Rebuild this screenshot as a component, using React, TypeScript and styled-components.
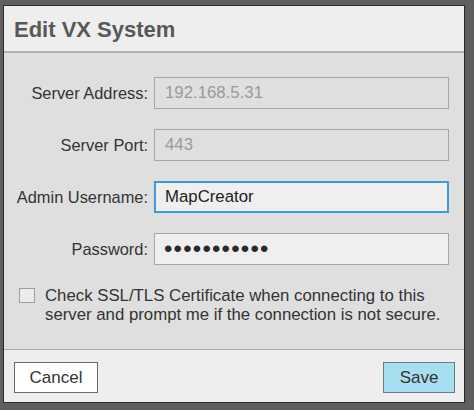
import React from "react";
import styled, { createGlobalStyle } from "styled-components";

const Global = createGlobalStyle`
  *, *::before, *::after { box-sizing: border-box; }
  html, body { margin: 0; padding: 0; background: #5f5f5f; }
  body { font-family: "Liberation Sans", Arial, sans-serif; }
  #root { width: 474px; height: 410px; overflow: hidden; }
`;

const Dialog = styled.div`
  margin: 5px 0 0 3px;
  width: 462px;
  height: 398px;
  border: 1px solid #2a2a2a;
  display: flex;
  flex-direction: column;
  background: #dfdfdf;
`;

const Header = styled.div`
  flex: none;
  height: 47px;
  background: #eeeeee;
  border-bottom: 2px solid #b3b3b3;
  display: flex;
  align-items: center;
  padding: 3px 0 0 10px;
`;

const Title = styled.h1`
  margin: 0;
  font-size: 22px;
  font-weight: bold;
  color: #585858;
`;

const Body = styled.div`
  flex: 1;
  padding: 24px 14px 0 15px;
  display: flex;
  flex-direction: column;
`;

const Fields = styled.div`
  display: grid;
  grid-template-columns: 144px 295px;
  column-gap: 6px;
  row-gap: 20px;
  margin-left: -15px;
  align-items: center;
`;

const Label = styled.label`
  text-align: right;
  font-size: 16.4px;
  color: #333;
`;

const Input = styled.input<{ $state?: "disabled" | "focus" | "normal" }>`
  height: 32px;
  width: 295px;
  padding: 0 10px;
  font-family: "Liberation Sans", Arial, sans-serif;
  font-size: 16.8px;
  outline: none;
  border-radius: 0;
  border: ${(p) =>
    p.$state === "focus" ? "2px solid #3f9bd4" : "1px solid #a6a6a6"};
  padding-left: ${(p) => (p.$state === "focus" ? "9px" : "10px")};
  background: ${(p) => (p.$state === "disabled" ? "#dfdfdf" : "#efefef")};
  color: ${(p) => (p.$state === "disabled" ? "#9a9a9a" : "#222")};
  &:disabled { -webkit-text-fill-color: #9a9a9a; opacity: 1; }
`;

const Password = styled(Input)`
  font-size: 24px;
  letter-spacing: 1.2px;
  padding-left: 9px;
  color: #2a2a2a;
`;

const CheckRow = styled.label`
  display: flex;
  align-items: flex-start;
  gap: 10px;
  margin-top: 21px;
  margin-left: 0;
  font-size: 16.8px;
  line-height: 19px;
  color: #333;
`;

const Box = styled.span`
  flex: none;
  width: 16px;
  height: 15px;
  border: 1px solid #9e9e9e;
  background: #ececec;
  margin-top: 2px;
`;

const Footer = styled.div`
  flex: none;
  height: 53px;
  border-top: 1px solid #a9a9a9;
  background: #eeeeee;
  display: flex;
  justify-content: space-between;
  align-items: flex-start;
  padding: 12px 9px 0 10px;
`;

const Button = styled.button<{ $primary?: boolean }>`
  height: 31px;
  width: ${(p) => (p.$primary ? "72px" : "84px")};
  font-family: "Liberation Sans", Arial, sans-serif;
  font-size: 17px;
  color: #333;
  background: ${(p) => (p.$primary ? "#a7def0" : "#ffffff")};
  border: 1px solid ${(p) => (p.$primary ? "#62808a" : "#6a6a6a")};
  border-radius: 0;
  padding: 0;
`;

export default function App() {
  return (
    <>
      <Global />
      <Dialog>
        <Header>
          <Title>Edit VX System</Title>
        </Header>
        <Body>
          <Fields>
            <Label>Server Address:</Label>
            <Input $state="disabled" disabled defaultValue="192.168.5.31" />
            <Label>Server Port:</Label>
            <Input $state="disabled" disabled defaultValue="443" />
            <Label>Admin Username:</Label>
            <Input $state="focus" defaultValue="MapCreator" />
            <Label>Password:</Label>
            <Password $state="normal" type="password" defaultValue="abcdefghijk" />
          </Fields>
          <CheckRow>
            <Box />
            <span>
              Check SSL/TLS Certificate when connecting to this
              <br />
              server and prompt me if the connection is not secure.
            </span>
          </CheckRow>
        </Body>
        <Footer>
          <Button>Cancel</Button>
          <Button $primary>Save</Button>
        </Footer>
      </Dialog>
    </>
  );
}
